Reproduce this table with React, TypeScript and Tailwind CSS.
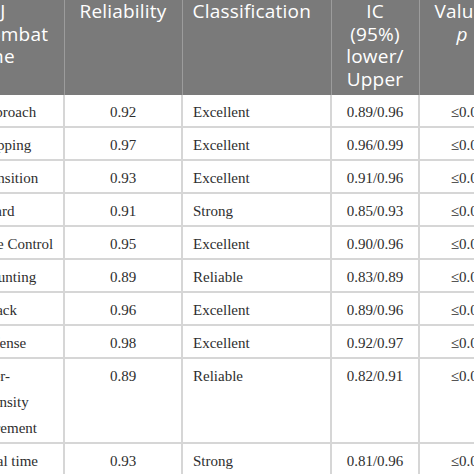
import React from 'react'

type Row = {
  name: React.ReactNode
  rel: string
  cls: string
  ic: string
  p: string
}

const rows: Row[] = [
  { name: 'Approach', rel: '0.92', cls: 'Excellent', ic: '0.89/0.96', p: '≤0.01' },
  { name: 'Gripping', rel: '0.97', cls: 'Excellent', ic: '0.96/0.99', p: '≤0.01' },
  { name: 'Transition', rel: '0.93', cls: 'Excellent', ic: '0.91/0.96', p: '≤0.01' },
  { name: 'Guard', rel: '0.91', cls: 'Strong', ic: '0.85/0.93', p: '≤0.01' },
  { name: 'Side Control', rel: '0.95', cls: 'Excellent', ic: '0.90/0.96', p: '≤0.01' },
  { name: 'Mounting', rel: '0.89', cls: 'Reliable', ic: '0.83/0.89', p: '≤0.01' },
  { name: 'Attack', rel: '0.96', cls: 'Excellent', ic: '0.89/0.96', p: '≤0.01' },
  { name: 'Defense', rel: '0.98', cls: 'Excellent', ic: '0.92/0.97', p: '≤0.01' },
  {
    name: (
      <>
        Inter-
        <br />
        intensity
        <br />
        increment
      </>
    ),
    rel: '0.89',
    cls: 'Reliable',
    ic: '0.82/0.91',
    p: '≤0.01',
  },
  { name: 'Total time', rel: '0.93', cls: 'Strong', ic: '0.81/0.96', p: '≤0.01' },
]

const head = 'bg-[#7a7a7a] text-white align-top font-normal pt-0 pb-[5px] border-r border-[#9c9c9c]'
const cell = 'align-top pt-[4px] pb-[1px] border-r-2 border-[#d6d6d6] whitespace-nowrap'

export default function App() {
  return (
    <div className="w-[474px] h-[474px] overflow-hidden bg-white">
      <table
        className="-ml-[33px] w-[550px] table-fixed border-collapse"
        style={{ fontFamily: '"Liberation Serif", serif' }}
      >
        <colgroup>
          <col className="w-[97px]" />
          <col className="w-[118px]" />
          <col className="w-[149px]" />
          <col className="w-[88px]" />
          <col className="w-[98px]" />
        </colgroup>
        <thead className="font-['Open_Sans',sans-serif] text-[19px] leading-[22.5px] tracking-[0.2px]">
          <tr>
            <th className={`${head} text-left pl-[10px]`}>
              IBJJ
              <br />
              Combat
              <br />
              Line
            </th>
            <th className={`${head} text-center`}>Reliability</th>
            <th className={`${head} text-left pl-[10px]`}>Classification</th>
            <th className={`${head} text-center`}>
              IC
              <br />
              (95%)
              <br />
              lower/
              <br />
              Upper
            </th>
            <th className={`${head} text-left pl-[15px] whitespace-nowrap`}>
              Value of
              <br />
              <span className="pl-[22px] italic">p</span>
            </th>
          </tr>
        </thead>
        <tbody className="text-[15px] leading-[26px] text-[#2e2e2e]">
          {rows.map((r, i) => (
            <tr key={i} className="border-b-2 border-[#d6d6d6]">
              <td className={`${cell} pl-[10px] text-left`}>{r.name}</td>
              <td className={`${cell} text-center`}>{r.rel}</td>
              <td className={`${cell} pl-[10px] text-left`}>{r.cls}</td>
              <td className={`${cell} text-center`}>{r.ic}</td>
              <td className={`${cell} text-center`}>{r.p}</td>
            </tr>
          ))}
        </tbody>
      </table>
    </div>
  )
}
